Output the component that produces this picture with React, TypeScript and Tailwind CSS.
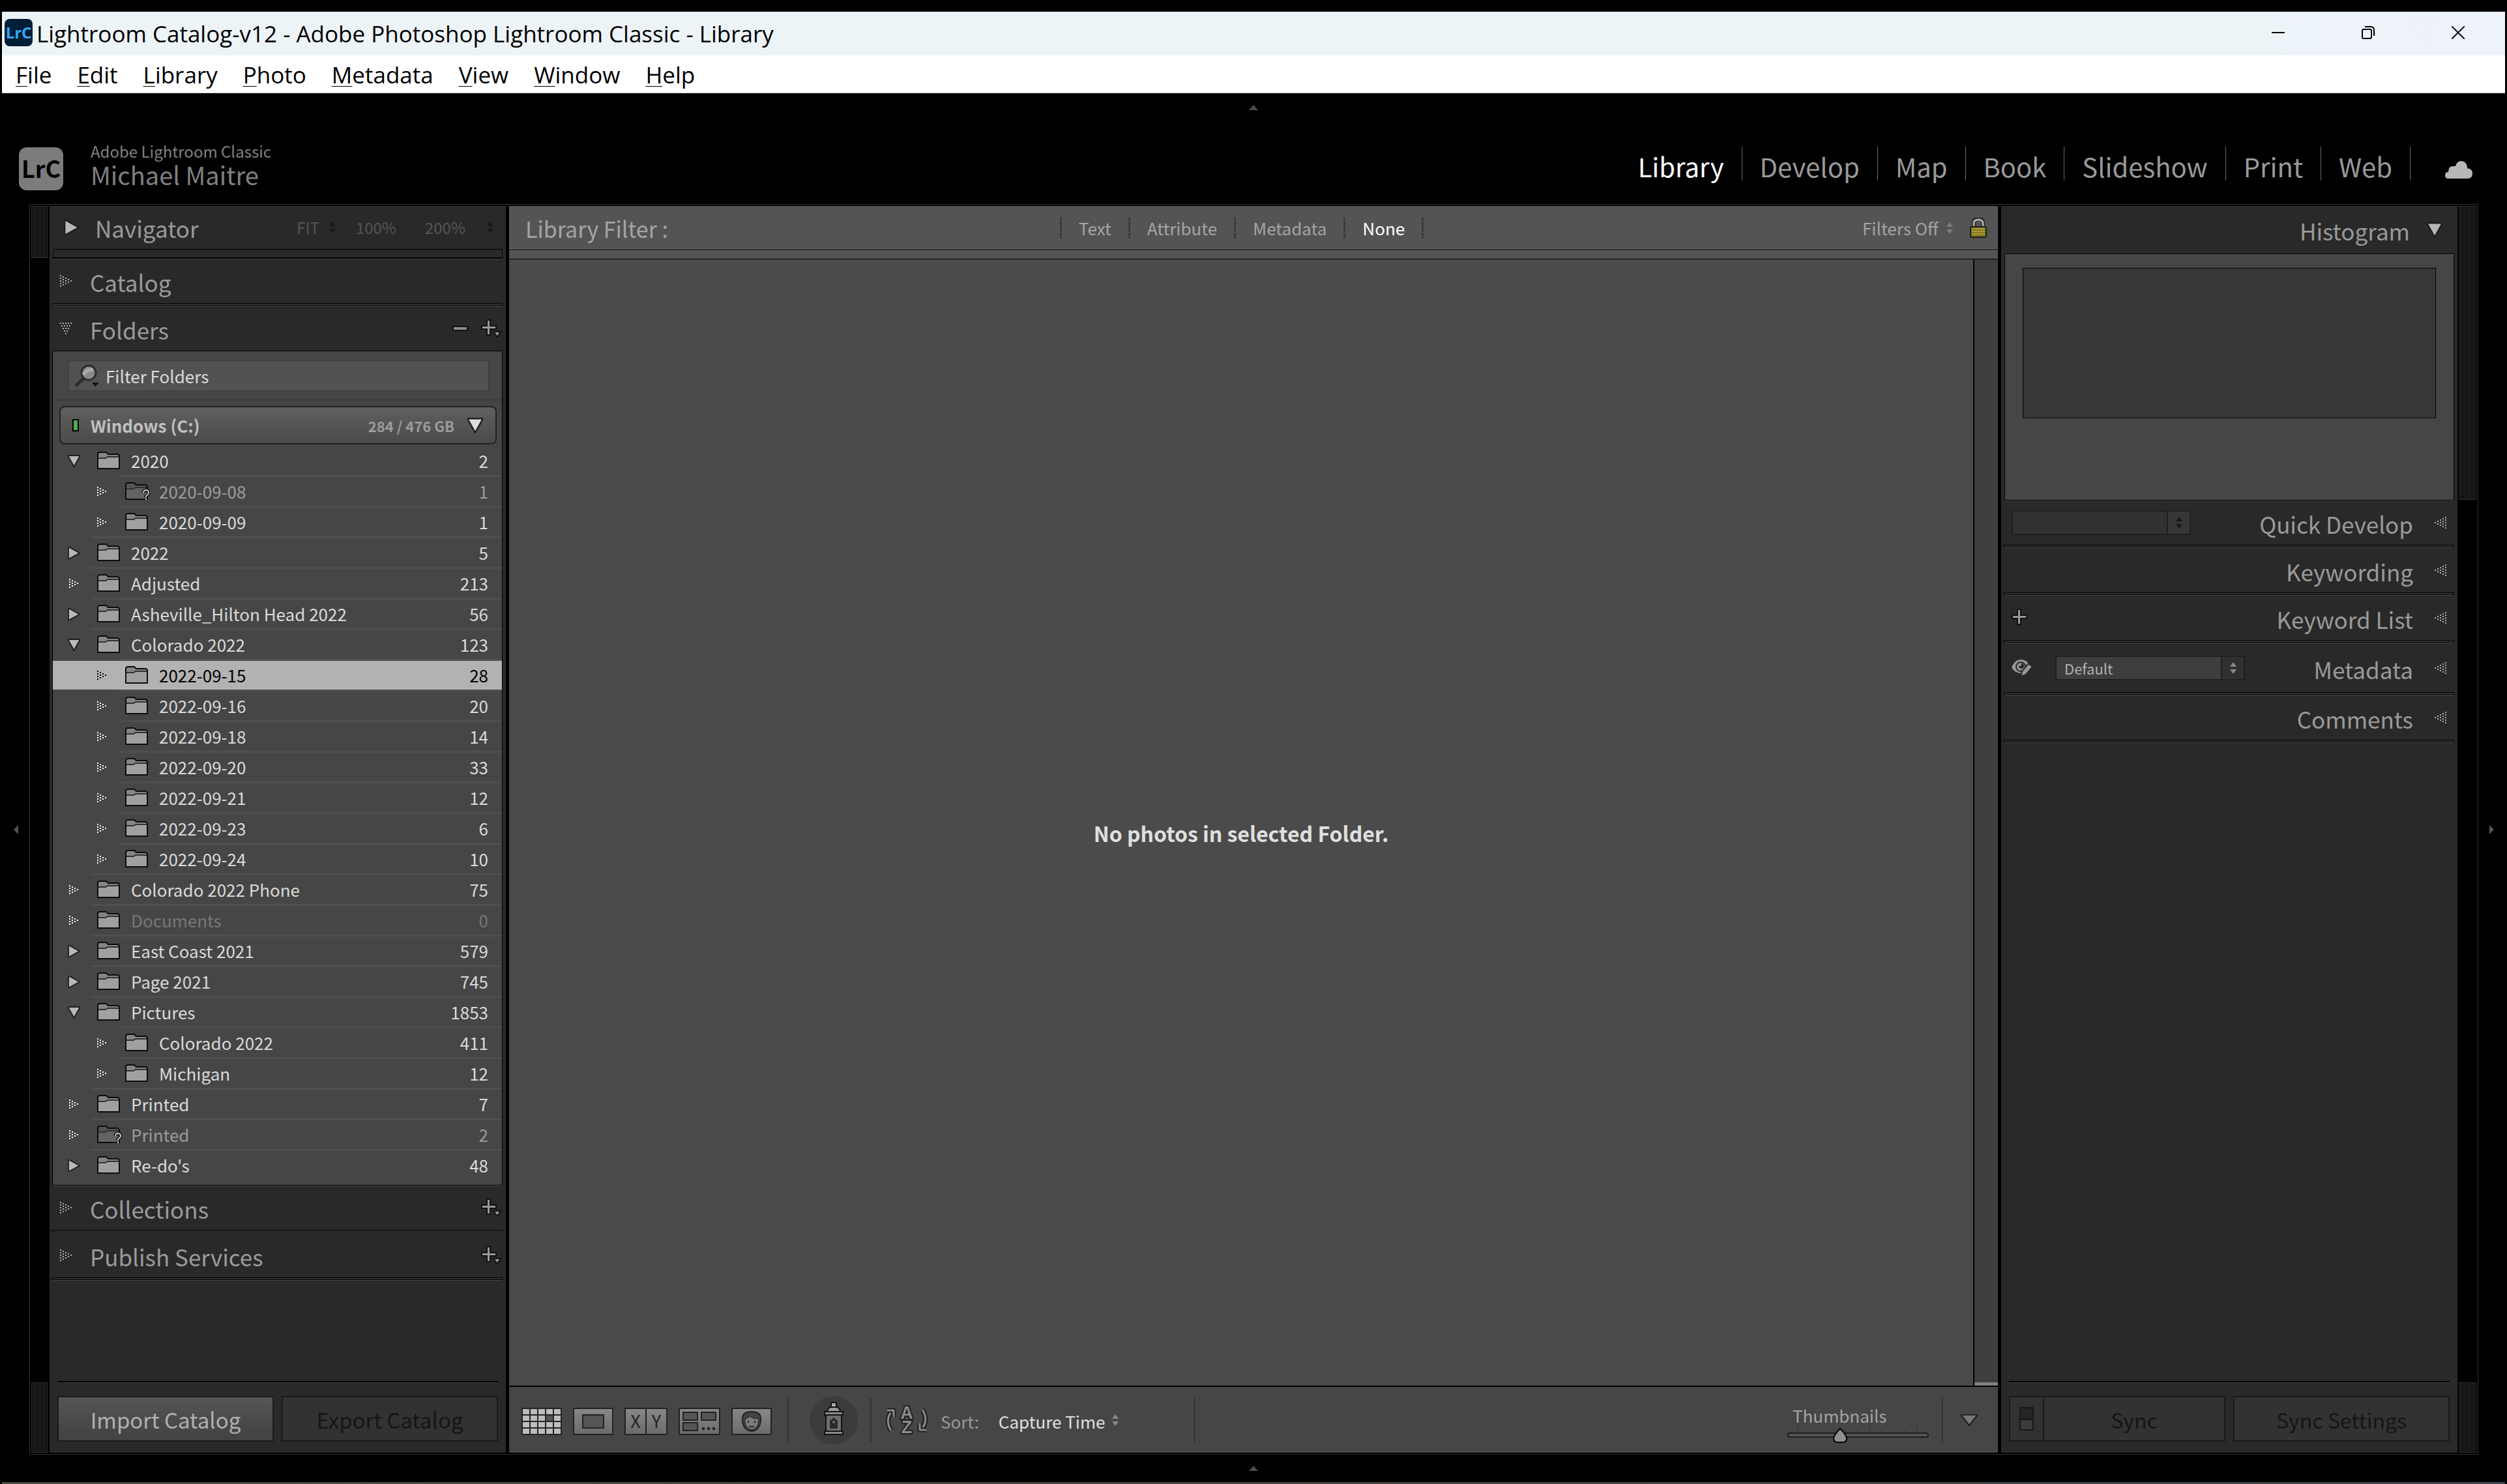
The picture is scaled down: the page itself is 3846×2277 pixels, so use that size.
import { useState } from 'react';
import type { ReactNode } from 'react';
import clsx from 'clsx';

type Arrow = 'closed' | 'open' | 'empty';

interface FolderItem {
  name: string;
  count: number;
  level: 0 | 1;
  arrow: Arrow;
  missing?: boolean;
  dimmed?: boolean;
}

const folders: FolderItem[] = [
  { name: '2020', count: 2, level: 0, arrow: 'open' },
  { name: '2020-09-08', count: 1, level: 1, arrow: 'empty', missing: true },
  { name: '2020-09-09', count: 1, level: 1, arrow: 'empty' },
  { name: '2022', count: 5, level: 0, arrow: 'closed' },
  { name: 'Adjusted', count: 213, level: 0, arrow: 'empty' },
  { name: 'Asheville_Hilton Head 2022', count: 56, level: 0, arrow: 'closed' },
  { name: 'Colorado 2022', count: 123, level: 0, arrow: 'open' },
  { name: '2022-09-15', count: 28, level: 1, arrow: 'empty' },
  { name: '2022-09-16', count: 20, level: 1, arrow: 'empty' },
  { name: '2022-09-18', count: 14, level: 1, arrow: 'empty' },
  { name: '2022-09-20', count: 33, level: 1, arrow: 'empty' },
  { name: '2022-09-21', count: 12, level: 1, arrow: 'empty' },
  { name: '2022-09-23', count: 6, level: 1, arrow: 'empty' },
  { name: '2022-09-24', count: 10, level: 1, arrow: 'empty' },
  { name: 'Colorado 2022 Phone', count: 75, level: 0, arrow: 'empty' },
  { name: 'Documents', count: 0, level: 0, arrow: 'empty', dimmed: true },
  { name: 'East Coast 2021', count: 579, level: 0, arrow: 'closed' },
  { name: 'Page 2021', count: 745, level: 0, arrow: 'closed' },
  { name: 'Pictures', count: 1853, level: 0, arrow: 'open' },
  { name: 'Colorado 2022', count: 411, level: 1, arrow: 'empty' },
  { name: 'Michigan', count: 12, level: 1, arrow: 'empty' },
  { name: 'Printed', count: 7, level: 0, arrow: 'empty' },
  { name: 'Printed', count: 2, level: 0, arrow: 'empty', missing: true },
  { name: "Re-do's", count: 48, level: 0, arrow: 'closed' },
];

const menus = ['File', 'Edit', 'Library', 'Photo', 'Metadata', 'View', 'Window', 'Help'];
const modules = ['Library', 'Develop', 'Map', 'Book', 'Slideshow', 'Print', 'Web'];
const filters = ['Text', 'Attribute', 'Metadata', 'None'];

/* ---------- icons ---------- */

function DottedTriangle({ dir, size = 5, className }: { dir: 'right' | 'left' | 'down'; size?: number; className?: string }) {
  const dots: ReactNode[] = [];
  const last = (size - 1) * 4;
  for (let i = 0; i < size; i++) {
    for (let j = 0; j < size - i; j++) {
      const a = i * 4;
      const b = j * 4 + i * 2;
      const x = dir === 'right' ? a : dir === 'left' ? last - a : b;
      const y = dir === 'down' ? a : b;
      dots.push(<rect key={`${i}-${j}`} x={x} y={y} width="2" height="2" />);
    }
  }
  const box = last + 2;
  return (
    <svg width={box} height={box} viewBox={`0 0 ${box} ${box}`} fill="currentColor" className={clsx('shrink-0', className)}>
      {dots}
    </svg>
  );
}

function Triangle({ dir, className }: { dir: 'right' | 'down'; className?: string }) {
  return (
    <svg viewBox="0 0 20 20" preserveAspectRatio="none" className={clsx('shrink-0', className)} stroke="#1e1e1e" strokeWidth="2" strokeLinejoin="round">
      <path d={dir === 'right' ? 'M1 0 L19 10 L1 20 Z' : 'M0 1 L20 1 L10 19 Z'} fill="currentColor" />
    </svg>
  );
}

function UpDown({ className }: { className?: string }) {
  return (
    <svg width="10" height="18" viewBox="0 0 10 18" fill="currentColor" className={clsx('shrink-0 pointer-events-none', className)}>
      <path d="M5 0 L10 7 H0 Z M0 11 H10 L5 18 Z" />
    </svg>
  );
}

function FolderIcon({ missing }: { missing?: boolean }) {
  return (
    <svg width="38" height="28" viewBox="0 0 38 28" className="shrink-0">
      <path d="M1 26 V3 L3 1 H14 L17 4 H32 L34 6 V26 Z" fill={missing ? '#555' : '#858585'} stroke="#0c0c0c" strokeWidth="2" strokeLinejoin="round" />
      <path d="M2 10 H13 L16 8 H33 V25 H2 Z" fill={missing ? '#636363' : '#a0a0a0'} />
      <path d="M2 10 H13 L16 8 H33" fill="none" stroke="#333" strokeWidth="2" />
      {missing && (
        <>
          <path d="M28 16 Q28 12 32 12 Q36 12 36 16 Q36 18 32 21 V23 M32 25 V27" fill="none" stroke="#0c0c0c" strokeWidth="5" />
          <path d="M28 16 Q28 12 32 12 Q36 12 36 16 Q36 18 32 21 V23 M32 25 V27" fill="none" stroke="#c8c8c8" strokeWidth="2" />
        </>
      )}
    </svg>
  );
}

function PlusIcon({ menu }: { menu?: boolean }) {
  return (
    <svg width={menu ? 31 : 24} height="28" viewBox={menu ? '0 0 31 28' : '0 0 24 28'} className="shrink-0">
      <path d="M9 1 H14 V10 H23 V15 H14 V24 H9 V15 H1 V10 H9 Z" fill="#9a9a9a" stroke="#111" strokeWidth="2" />
      {menu && <path d="M19 19 H30 L25 27 Z" fill="#9a9a9a" stroke="#111" strokeWidth="2" />}
    </svg>
  );
}

function MinusIcon() {
  return (
    <svg width="24" height="8" viewBox="0 0 24 8" className="shrink-0">
      <rect x="1" y="1" width="22" height="6" fill="#8c8c8c" stroke="#111" strokeWidth="2" />
    </svg>
  );
}

function SearchIcon() {
  return (
    <svg width="38" height="36" viewBox="0 0 38 36" className="shrink-0">
      <path d="M14 22 L2 33" stroke="#2c2c2c" strokeWidth="5" />
      <circle cx="22" cy="13" r="11" fill="#8a8a8a" stroke="#2c2c2c" strokeWidth="3" />
      <path d="M14 16 Q18 8 29 8" stroke="#a8a8a8" strokeWidth="5" fill="none" />
      <path d="M27 28 H38 L32 34 Z" fill="#111" />
    </svg>
  );
}

function LockIcon() {
  return (
    <svg width="26" height="32" viewBox="0 0 26 32" className="shrink-0">
      <path d="M6 16 V9 Q6 2 13 2 Q20 2 20 9 V16" fill="none" stroke="#222" strokeWidth="6" />
      <path d="M6 16 V9 Q6 3 13 3 Q20 3 20 9 V16" fill="none" stroke="#b0b0b0" strokeWidth="3" />
      <rect x="1" y="14" width="24" height="16" rx="2" fill="#83761c" stroke="#1e1e1e" strokeWidth="2" />
      <path d="M3 17 H23 M3 21 H23 M3 25 H23" stroke="#a89a38" strokeWidth="2" />
    </svg>
  );
}

function EyeIcon() {
  return (
    <svg width="32" height="26" viewBox="0 0 32 26" className="shrink-0">
      <path d="M0 12 Q5 0 14 0 Q23 0 28 9 L19 21 Q5 22 0 12 Z" fill="#999" />
      <circle cx="14" cy="11" r="8" fill="#292929" />
      <circle cx="14" cy="11" r="6" fill="#999" />
      <circle cx="15" cy="10" r="4" fill="#292929" />
      <circle cx="13" cy="8" r="2" fill="#999" />
      <path d="M14 26 L16 18 L26 6 L32 11 L22 23 Z" fill="#999" stroke="#292929" strokeWidth="2" />
    </svg>
  );
}

function CloudIcon() {
  return (
    <svg width="42" height="28" viewBox="0 0 42 28" className="shrink-0" fill="#b8b8b8">
      <path d="M5 27 Q0 27 0 22 Q0 17 5 17 Q5 8 12 8 Q14 8 16 8 Q18 0 25 0 Q34 1 34 11 Q42 12 42 19 Q42 27 34 27 Z" />
    </svg>
  );
}

function GridIcon() {
  const cells: ReactNode[] = [];
  for (let r = 0; r < 4; r++) {
    for (let c = 0; c < 5; c++) {
      const off = r === 1 && c === 3;
      cells.push(<rect key={`${r}${c}`} x={2 + c * 12} y={2 + r * 10} width="10" height="8" fill={off ? '#555' : '#bdbdbd'} />);
    }
  }
  return (
    <svg width="62" height="42" viewBox="0 0 62 42">
      <rect width="62" height="42" fill="#222" />
      {cells}
    </svg>
  );
}

function ViewFrame({ width = 62, children }: { width?: number; children: ReactNode }) {
  return (
    <svg width={width} height="42" viewBox={`0 0 ${width} 42`}>
      <defs>
        <linearGradient id="viewFrame" x1="0" y1="0" x2="0" y2="1">
          <stop offset="0" stopColor="#888" />
          <stop offset="1" stopColor="#6b6b6b" />
        </linearGradient>
      </defs>
      <rect x="1" y="1" width={width - 2} height="40" fill="url(#viewFrame)" stroke="#222" strokeWidth="2" />
      {children}
    </svg>
  );
}

function SprayCanIcon() {
  return (
    <svg width="74" height="74" viewBox="0 0 74 74">
      <circle cx="37" cy="37" r="37" fill="#3c3c3c" />
      <g stroke="#111" strokeWidth="2" fill="#8a8a8a">
        <rect x="33" y="10" width="8" height="7" fill="#aaa" />
        <path d="M27 25 Q28 17 33 17 H41 Q46 17 47 25 Z" fill="#999" />
        <rect x="25" y="29" width="24" height="26" fill="#6e6e6e" />
        <rect x="23" y="24" width="28" height="5" />
        <rect x="23" y="54" width="28" height="5" />
      </g>
      <path d="M31 50 V38 L37 33 L43 38 V50 Z" fill="#2a2a2a" />
      <circle cx="37" cy="40" r="2" fill="#777" />
    </svg>
  );
}

function SortDirectionIcon() {
  return (
    <svg width="66" height="54" viewBox="0 -3 66 54" strokeLinejoin="round">
      <g fontFamily="Liberation Sans, sans-serif" fontWeight="700" fontSize="27" textAnchor="middle" fill="#8a8a8a" stroke="#1e1e1e" strokeWidth="4" paintOrder="stroke">
        <text x="33" y="22">A</text>
        <text x="33" y="44">Z</text>
      </g>
      <g fill="none">
        <path d="M9 40 Q0 26 8 13 M3 9 H13 V19" stroke="#1e1e1e" strokeWidth="7" />
        <path d="M9 40 Q0 26 8 13 M3 9 H13 V19" stroke="#8a8a8a" strokeWidth="3" />
        <path d="M57 8 Q66 22 58 35 M63 39 H53 V29" stroke="#1e1e1e" strokeWidth="7" />
        <path d="M57 8 Q66 22 58 35 M63 39 H53 V29" stroke="#8a8a8a" strokeWidth="3" />
      </g>
    </svg>
  );
}

function SliderTrack() {
  return (
    <svg width="218" height="26" viewBox="0 0 218 26">
      {[16, 34, 52, 89, 107, 126, 144, 162, 180, 199].map((x, i) => (
        <path key={x} d={i % 5 === 0 || i === 9 ? `M${x} 0 V6` : `M${x} 3 V6`} stroke="#2c2c2c" strokeWidth="1" />
      ))}
      <rect x="1" y="8" width="215" height="6" rx="3" fill="#555" stroke="#1e1e1e" strokeWidth="2" />
      <path d="M81 1 Q91 11 91 16 Q91 21 86 22 H76 Q71 21 71 16 Q71 11 81 1 Z" fill="#8f8f8f" stroke="#000" strokeWidth="2" />
    </svg>
  );
}

/* ---------- panel pieces ---------- */

function Divider() {
  return (
    <div className="ml-1 mr-[5px] h-[5px] border border-black border-b-[#4a4a4a] bg-[#333]">
      <div className="h-[3px] border-b border-black" />
    </div>
  );
}

function LeftSection({ title, open, children }: { title: string; open?: boolean; children?: ReactNode }) {
  return (
    <div className="flex h-[68px] items-center pl-4 pr-[7px]">
      <button className="flex flex-1 items-center gap-7 text-left text-[35px] leading-10 text-[#9a9a9a]">
        <DottedTriangle dir={open ? 'down' : 'right'} className="text-[#b0b0b0]" />
        <span className="pt-1">{title}</span>
      </button>
      <div className="flex items-center gap-5">{children}</div>
    </div>
  );
}

function RightSection({ title, tall, children }: { title: string; tall?: boolean; children?: ReactNode }) {
  return (
    <div className={clsx('flex items-center pl-4 pr-[17px]', tall ? 'h-[75px]' : 'h-[68px]')}>
      {children}
      <button className="flex flex-1 items-center justify-end gap-[33px] text-[35px] leading-10 text-[#9a9a9a]">
        <span className="pt-1">{title}</span>
        <DottedTriangle dir="left" className="text-[#b0b0b0]" />
      </button>
    </div>
  );
}

function FolderRow({ item, selected, nextLevel, onSelect }: { item: FolderItem; selected: boolean; nextLevel?: 0 | 1; onSelect: () => void }) {
  return (
    <li>
      <button
        onClick={onSelect}
        className={clsx(
          'flex h-11 w-full items-center pr-[21px] text-left text-[26px] leading-8',
          item.level === 1 ? 'pl-[66px]' : 'pl-[23px]',
          selected ? 'bg-[#b2b2b2] text-black' : item.dimmed ? 'text-[#777]' : item.missing ? 'text-[#9c9c9c]' : 'text-[#dadada]'
        )}
      >
        <span className="flex w-[45px] items-center">
          {item.arrow === 'empty' ? (
            <DottedTriangle dir="right" size={4} className={clsx('ml-0.5', selected ? 'text-black' : 'text-white')} />
          ) : (
            <Triangle dir={item.arrow === 'open' ? 'down' : 'right'} className="size-[19px] text-[#b8b8b8]" />
          )}
        </span>
        <FolderIcon missing={item.missing} />
        <span className="ml-3.5 flex-1">{item.name}</span>
        <span>{item.count}</span>
      </button>
      {nextLevel !== undefined && <div className={clsx('h-[3px] bg-[#4f4f4f]', nextLevel === 1 ? 'ml-[101px]' : 'ml-[58px]')} />}
    </li>
  );
}

function PanelGrip({ className }: { className: string }) {
  return <div className={clsx('mx-0.5 border-y border-[#2e2e2e] bg-[repeating-linear-gradient(90deg,#2e2e2e_0_1px,#000_1px_2px)]', className)} />;
}

function ToolSeparator() {
  return <div className="h-[68px] w-[3px] shrink-0 border-r border-[#4f4f4f] bg-[#303030]" />;
}

function FilterSeparator() {
  return <div className="h-[31px] w-[3px] bg-[repeating-linear-gradient(180deg,#111_0_1px,transparent_1px_3px)]" />;
}

/* ---------- app regions ---------- */

function TitleBar() {
  return (
    <div className="mx-[3px] flex h-[67px] items-center bg-linear-to-r from-[#edf4f8] from-90% to-[#eef2fb] pl-1 pr-[3px] font-['Open_Sans','Noto_Sans',sans-serif]">
      <div className="mb-1 flex h-[42px] w-[43px] items-center justify-center rounded-lg bg-[#001e36] text-[24px] font-bold leading-6 text-[#31a8ff]">LrC</div>
      <h1 className="ml-1.5 flex-1 text-[35px] leading-10 text-black">Lightroom Catalog-v12 - Adobe Photoshop Lightroom Classic - Library</h1>
      <div className="flex h-full">
        <button aria-label="Minimize" className="flex w-[138px] items-center justify-center pb-1">
          <svg width="20" height="20" viewBox="0 0 20 20" stroke="#000" strokeWidth="2"><path d="M0 10 H20" /></svg>
        </button>
        <button aria-label="Restore" className="flex w-[138px] items-center justify-center pb-1">
          <svg width="20" height="20" viewBox="0 0 20 20" stroke="#000" strokeWidth="2" fill="none">
            <rect x="1" y="5" width="14" height="14" rx="2" />
            <path d="M5 1 H14 Q19 1 19 6 V15" />
          </svg>
        </button>
        <button aria-label="Close" className="flex w-[138px] items-center justify-center pb-1">
          <svg width="20" height="20" viewBox="0 0 20 20" stroke="#111" strokeWidth="2"><path d="M0 0 L20 20 M20 0 L0 20" /></svg>
        </button>
      </div>
    </div>
  );
}

function MenuBar() {
  return (
    <nav className="mx-[3px] flex h-[58px] items-center gap-[39px] border-b-2 border-[#f0f0f0] bg-white pl-[21px] pt-1 font-['Open_Sans','Noto_Sans',sans-serif] text-[35px] leading-10 text-black">
      {menus.map((m) => (
        <button key={m}>
          <span className="underline decoration-1 underline-offset-4">{m[0]}</span>
          {m.slice(1)}
        </button>
      ))}
    </nav>
  );
}

function Header() {
  return (
    <header className="flex h-[170px] flex-col pt-[18px]">
      <button aria-label="Hide module picker" className="self-center">
        <svg width="14" height="8" viewBox="0 0 14 8" fill="#4a4a4a"><path d="M7 0 L14 8 H0 Z" /></svg>
      </button>
      <div className="flex items-start pl-[29px] pr-[53px] pt-[46px]">
        <div className="mt-[11px] flex h-[66px] w-[68px] items-center justify-center rounded-xl bg-[#7c7c7c] pb-1 text-[36px] font-bold leading-10 text-black">LrC</div>
        <div className="ml-[42px] flex-1 text-[#808080]">
          <p className="pt-px text-[24px] leading-8">Adobe Lightroom Classic</p>
          <p className="text-[38px] leading-10">Michael Maitre</p>
        </div>
        <nav className="mt-2.5 flex h-[52px] items-center text-[40px] leading-10">
          {modules.map((m) => (
            <div key={m} className="flex h-full items-center border-r border-[#6a6a6a] px-[27px]">
              <button className={clsx('pt-2', m === 'Library' ? 'text-white' : 'text-[#999]')}>{m}</button>
            </div>
          ))}
          <button aria-label="Cloud sync" className="ml-[53px] pt-5">
            <CloudIcon />
          </button>
        </nav>
      </div>
    </header>
  );
}

function LeftPanel() {
  const [selected, setSelected] = useState(7);

  return (
    <aside className="flex w-[700px] shrink-0 flex-col bg-[#292929]">
      {/* Navigator */}
      <div className="flex h-[66px] items-center pl-[22px] pr-[19px] text-[24px] leading-8 text-[#555]">
        <button className="flex flex-1 items-center gap-6 text-left text-[35px] leading-10 text-[#9a9a9a]">
          <Triangle dir="right" className="size-6 text-[#b8b8b8]" />
          <span className="pt-0.5">Navigator</span>
        </button>
        <button className="flex items-center gap-[15px]">FIT <UpDown className="text-[#181818]" /></button>
        <button className="ml-[31px]">100%</button>
        <button className="ml-11">200%</button>
        <UpDown className="ml-[33px] text-[#181818]" />
      </div>
      <div className="mx-[5px] h-[15px] border border-black border-b-2 shadow-[0_1px_0_#444]" />

      <LeftSection title="Catalog" />
      <Divider />
      <LeftSection title="Folders" open>
        <button aria-label="Remove folder"><MinusIcon /></button>
        <button aria-label="Add folder"><PlusIcon menu /></button>
      </LeftSection>

      <div className="ml-1 mr-[5px] border border-black bg-[#464646] pb-2 shadow-[0_1px_0_#4a4a4a]">
        <label className="ml-6 mr-5 mt-3.5 flex h-[47px] items-center border border-[#3c3c3c] bg-[#525252] pl-2">
          <SearchIcon />
          <input aria-label="Filter Folders" placeholder="Filter Folders" className="ml-2.5 flex-1 bg-transparent text-[26px] leading-8 text-[#dadada] outline-none placeholder:text-[#dadada]" />
        </label>
        <div className="mt-3 h-[3px] bg-[#3e3e3e]" />
        <button className="mx-2.5 mt-2 flex h-[59px] w-[671px] items-center rounded-lg border-2 border-[#222] bg-linear-to-b from-[#606060] to-[#4a4a4a] pl-[18px] pr-[19px] text-left text-[26px] font-bold leading-8 text-[#c0c0c0]">
          <span className="h-[19px] w-2.5 border-2 border-black bg-[#4caf50]" />
          <span className="ml-[18px] flex-1">Windows (C:)</span>
          <span className="text-[22px] text-[#9c9c9c]">284 / 476 GB</span>
          <Triangle dir="down" className="ml-5 size-6 text-[#dcdcdc]" />
        </button>
        <ul className="mt-[3px]">
          {folders.map((f, i) => (
            <FolderRow key={i} item={f} selected={selected === i} nextLevel={folders[i + 1]?.level} onSelect={() => setSelected(i)} />
          ))}
        </ul>
      </div>

      <LeftSection title="Collections">
        <button aria-label="Add collection"><PlusIcon menu /></button>
      </LeftSection>
      <Divider />
      <LeftSection title="Publish Services">
        <button aria-label="Add publish service"><PlusIcon menu /></button>
      </LeftSection>
      <Divider />

      {/* Catalog actions */}
      <div className="mx-3 mt-auto flex gap-3 border-t-2 border-black pb-[17px] pt-[21px] text-[33px] leading-10 shadow-[inset_0_1px_0_#3c3c3c]">
        <button className="h-[70px] flex-1 border-2 border-[#1a1a1a] bg-linear-to-b from-[#555] to-[#424242] pt-0.5 text-[#b0b0b0]">Import Catalog</button>
        <button className="h-[70px] flex-1 border-2 border-[#1a1a1a] bg-[#323232] pt-0.5 text-[#151515]">Export Catalog</button>
      </div>
    </aside>
  );
}

function FilterBar() {
  return (
    <div className="flex h-[67px] items-center bg-[#545454] pl-[25px] pr-[17px] text-[26px] leading-8 text-[#a4a4a4]">
      <span className="flex-1 pt-0.5 text-[34px] leading-10">Library Filter :</span>
      <div className="flex items-center gap-[26px] pr-11">
        <FilterSeparator />
        {filters.map((f) => (
          <div key={f} className="flex items-center gap-[26px]">
            <button className={clsx(f === 'None' && 'text-white')}>{f}</button>
            <FilterSeparator />
          </div>
        ))}
      </div>
      <div className="flex flex-1 items-center justify-end">
        <select aria-label="Filter preset" className="appearance-none bg-transparent">
          <option>Filters Off</option>
        </select>
        <UpDown className="ml-3 text-[#7c7c7c]" />
        <button aria-label="Lock filters" className="ml-[26px]"><LockIcon /></button>
      </div>
    </div>
  );
}

function Toolbar() {
  return (
    <div className="flex h-[101px] items-center bg-[#464646] pl-[19px] text-[26px] leading-8 text-[#999]">
      <div className="flex items-center gap-[17px] pt-1">
        <button aria-label="Grid view"><GridIcon /></button>
        <button aria-label="Loupe view">
          <ViewFrame><rect x="15" y="11" width="32" height="20" fill="#555" stroke="#222" strokeWidth="2" /></ViewFrame>
        </button>
        <button aria-label="Compare view">
          <ViewFrame width={66}>
            <path d="M33 1 V41" stroke="#222" strokeWidth="2" />
            <g fontFamily="Noto Sans CJK SC, sans-serif" fontSize="27" textAnchor="middle" fill="#222">
              <text x="17" y="31">X</text>
              <text x="49" y="31">Y</text>
            </g>
          </ViewFrame>
        </button>
        <button aria-label="Survey view">
          <ViewFrame width={64}>
            <g fill="#555" stroke="#222" strokeWidth="2">
              <rect x="7" y="7" width="22" height="12" />
              <rect x="35" y="7" width="22" height="12" />
              <rect x="7" y="23" width="22" height="12" />
            </g>
            <path d="M36 32 H40 M44 32 H48 M52 32 H56" stroke="#222" strokeWidth="4" />
          </ViewFrame>
        </button>
        <button aria-label="People view">
          <ViewFrame>
            <path d="M17 18 Q16 6 31 6 Q46 6 45 18 Q45 28 39 33 Q31 39 23 33 Q17 28 17 18 Z" fill="#444" stroke="#222" strokeWidth="2" />
            <path d="M21 17 Q25 17 28 13 Q34 18 41 16 Q43 26 37 31 Q31 36 25 31 Q20 26 21 17 Z" fill="#7c7c7c" stroke="#222" strokeWidth="1" />
            <path d="M26 20 V23 M36 20 V23 M27 28 Q31 31 35 28" stroke="#222" strokeWidth="2" fill="none" />
          </ViewFrame>
        </button>
      </div>
      <div className="ml-6 flex items-center gap-[31px]">
        <ToolSeparator />
        <button aria-label="Painter"><SprayCanIcon /></button>
      </div>
      <div className="ml-[19px] flex items-center">
        <ToolSeparator />
        <button aria-label="Sort direction" className="ml-5"><SortDirectionIcon /></button>
        <label htmlFor="sort" className="ml-[19px] pt-1">Sort:</label>
        <select id="sort" className="ml-[30px] appearance-none bg-transparent pt-1 text-[#e0e0e0]">
          <option>Capture Time</option>
        </select>
        <UpDown className="ml-2.5 text-[#888]" />
      </div>
      <div className="ml-[116px] flex-1"><ToolSeparator /></div>

      <div className="flex flex-col gap-[3px] pt-[15px]">
        <label htmlFor="thumbs" className="pl-2 text-[#a4a4a4]">Thumbnails</label>
        <div className="relative">
          <SliderTrack />
          <input id="thumbs" type="range" defaultValue={37} className="absolute inset-0 w-full opacity-0" />
        </div>
      </div>
      <div className="ml-[19px]"><ToolSeparator /></div>
      <button aria-label="Toolbar content" className="ml-[26px] mr-[31px]">
        <Triangle dir="down" className="h-[18px] w-[26px] text-[#777]" />
      </button>
    </div>
  );
}

function CenterPanel() {
  return (
    <main className="mx-[5px] flex min-w-0 flex-1 flex-col bg-[#4b4b4b]">
      <FilterBar />
      <div className="h-[15px] border-y border-black bg-[#545454] shadow-[inset_0_1px_0_#707070]" />
      <div className="flex flex-1">
        <div className="flex flex-1 items-center justify-center pt-8">
          <p className="text-[32px] font-bold leading-10 text-[#e0e0e0]">No photos in selected Folder.</p>
        </div>
        <div className="flex w-[38px] flex-col justify-end border-l-2 border-black bg-[#3f3f3f]">
          <div className="h-[5px] bg-[#808080]" />
        </div>
      </div>
      <div className="h-0.5 bg-black" />
      <Toolbar />
    </main>
  );
}

function RightPanel() {
  return (
    <aside className="flex w-[700px] shrink-0 flex-col bg-[#292929]">
      <button className="flex h-[73px] items-center justify-end gap-[26px] pr-[23px] text-[35px] leading-10 text-[#9a9a9a]">
        <span className="pt-0.5">Histogram</span>
        <Triangle dir="down" className="size-6 text-[#b8b8b8]" />
      </button>
      <div className="mx-[5px] h-[379px] border border-black bg-[#464646] px-[27px] pt-[21px] shadow-[0_1px_0_#444,inset_0_1px_0_#555]">
        <div className="h-[231px] border border-black bg-[#373737] shadow-[0_1px_0_#555]" />
      </div>

      <RightSection title="Quick Develop">
        <div className="flex h-[38px] w-[275px] items-center border-2 border-[#202020] bg-[#323232]">
          <select aria-label="Saved preset" disabled className="h-full flex-1 appearance-none" />
          <span className="flex h-full w-[35px] items-center justify-center border-l-2 border-[#202020] bg-[#363636]">
            <UpDown className="text-[#181818]" />
          </span>
        </div>
      </RightSection>
      <Divider />
      <RightSection title="Keywording" />
      <Divider />
      <RightSection title="Keyword List">
        <button aria-label="Add keyword"><PlusIcon /></button>
      </RightSection>
      <Divider />
      <RightSection title="Metadata" tall>
        <button aria-label="Customize metadata"><EyeIcon /></button>
        <div className="ml-[35px] flex h-[38px] w-[291px] items-center border-2 border-[#202020] bg-[#3e3e3e]">
          <select aria-label="Metadata preset" className="h-full flex-1 appearance-none bg-transparent pl-3 text-[22px] leading-8 text-[#b0b0b0]">
            <option>Default</option>
          </select>
          <span className="flex h-full w-[35px] items-center justify-center border-l-2 border-[#202020] bg-[#303030]">
            <UpDown className="text-[#888]" />
          </span>
        </div>
      </RightSection>
      <Divider />
      <RightSection title="Comments" />
      <Divider />

      {/* Sync actions */}
      <div className="mx-3 mt-auto flex gap-3 border-t-2 border-black pb-[17px] pt-[21px] text-[32px] leading-10 text-[#151515] shadow-[inset_0_1px_0_#3c3c3c]">
        <div className="flex h-[70px] flex-1 border-2 border-[#1a1a1a] bg-[#323232]">
          <button aria-label="Auto sync" className="flex w-[52px] items-center justify-center border-r-2 border-[#1a1a1a]">
            <svg width="22" height="36" viewBox="0 0 22 36" stroke="#161616" strokeWidth="2">
              <rect x="1" y="1" width="20" height="34" fill="#262626" />
              <rect x="1" y="19" width="20" height="16" fill="#3c3c3c" />
            </svg>
          </button>
          <button className="flex-1 pt-0.5">Sync</button>
        </div>
        <button className="h-[70px] flex-1 border-2 border-[#1a1a1a] bg-[#323232] pt-0.5">Sync Settings</button>
      </div>
    </aside>
  );
}

export default function App() {
  return (
    <div className="flex min-h-screen w-full flex-col bg-black pt-[18px] font-['Noto_Sans_CJK_SC','Open_Sans',sans-serif]">
      <TitleBar />
      <MenuBar />
      <Header />

      <div className="flex flex-1">
        <button aria-label="Hide left panel" className="flex w-[45px] items-center justify-center pl-1">
          <svg width="7" height="14" viewBox="0 0 7 14" fill="#555"><path d="M7 0 V14 L0 7 Z" /></svg>
        </button>
        <div className="flex min-w-0 flex-1 border border-[#333] py-0.5">
          <div className="flex w-[30px] flex-col justify-between">
            <PanelGrip className="h-20" />
            <PanelGrip className="h-[108px]" />
          </div>
          <LeftPanel />
          <CenterPanel />
          <RightPanel />
          <div className="flex w-[31px] flex-col justify-between">
            <PanelGrip className="h-[451px]" />
            <PanelGrip className="h-[108px]" />
          </div>
        </div>
        <button aria-label="Hide right panel" className="flex w-11 items-center justify-center pr-1">
          <svg width="7" height="14" viewBox="0 0 7 14" fill="#555"><path d="M0 0 L7 7 L0 14 Z" /></svg>
        </button>
      </div>

      <button aria-label="Hide filmstrip" className="flex h-[42px] items-center justify-center">
        <svg width="14" height="8" viewBox="0 0 14 8" fill="#4a4a4a"><path d="M7 0 L14 8 H0 Z" /></svg>
      </button>
      <div className="mx-[3px] h-[3px] bg-linear-to-r from-[#474b3f] via-[#47443d] to-[#40474f]" />
    </div>
  );
}
